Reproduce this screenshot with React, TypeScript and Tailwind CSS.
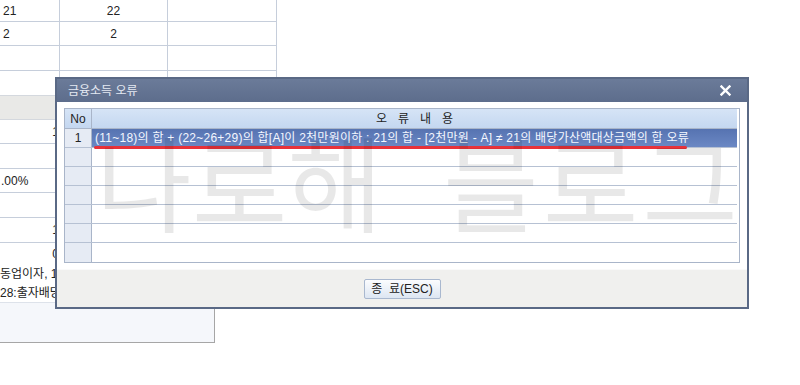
import React from "react";

const F = { fontFamily: '"Liberation Sans", "Noto Sans CJK KR", sans-serif' };

function Cell({ w, children, align = "left", border = true }: { w: string; children?: React.ReactNode; align?: string; border?: boolean }) {
  return (
    <div
      className={`${w} h-full flex items-center px-[3px] ${border ? "border-r border-[#c6cedb]" : ""} ${
        align === "center" ? "justify-center" : align === "right" ? "justify-end" : "justify-start"
      }`}
    >
      {children}
    </div>
  );
}

export default function App() {
  const emptyRows = [0, 1, 2, 3, 4, 5];
  return (
    <div className="relative w-[800px] h-[385px] bg-white overflow-hidden text-[12px] text-[#222]" style={F}>
      {/* Background page */}
      <div className="w-[277px] flex flex-col">
        <div className="flex h-[22px] border-b border-[#c6cedb]">
          <Cell w="w-[60px]">21</Cell>
          <Cell w="w-[108px]" align="center">22</Cell>
          <Cell w="w-[109px]" />
        </div>
        <div className="flex h-[24px] border-b border-[#c6cedb]">
          <Cell w="w-[60px]">2</Cell>
          <Cell w="w-[108px]" align="center">2</Cell>
          <Cell w="w-[109px]" />
        </div>
        <div className="flex h-[25px] border-b border-[#c6cedb]">
          <Cell w="w-[60px]" />
          <Cell w="w-[108px]" />
          <Cell w="w-[109px]" />
        </div>
        <div className="flex h-[24px]">
          <Cell w="w-[60px]" />
          <Cell w="w-[108px]" />
          <Cell w="w-[109px]" />
        </div>
        <div className="h-[25px] bg-[#e9e9e7] border-y border-[#d4d8de]" />
        <div className="h-[24px] border-b border-[#c6cedb] flex items-center justify-end w-[60px] pr-[1px]">1</div>
        <div className="h-[25px] border-b border-[#c6cedb]" />
        <div className="h-[24px] border-b border-[#c6cedb] flex items-center pl-[1px]">.00%</div>
        <div className="h-[25px] border-b border-[#c6cedb]" />
        <div className="h-[25px] border-b border-[#c6cedb] flex items-center justify-end w-[60px] pr-[1px]">1</div>
        <div className="h-[22px] flex items-center justify-end w-[60px] pr-[1px]">0</div>
        <div className="h-[37px] flex flex-col justify-center leading-[19px] whitespace-nowrap">
          <div>동업이자, 1</div>
          <div>28:출자배당</div>
        </div>
        <div className="w-[215px] h-[41px] bg-[#f5f7fb] border-r border-b border-[#a6a6a6] border-t border-t-[#dde2ea]" />
      </div>

      {/* Dialog window */}
      <div className="absolute left-[55px] top-[77px] w-[694px] h-[232px] border-2 border-[#5a6985] flex flex-col bg-white">
        <div className="h-[23px] shrink-0 bg-gradient-to-b from-[#6b7b99] to-[#5d6d8c] flex items-center justify-between pl-[11px] pr-[16px]">
          <span className="text-[#e4e9f2] text-[12px]">금융소득 오류</span>
          <svg width="11" height="11" viewBox="0 0 11 11">
            <path d="M1.5 1.5 L9.5 9.5 M9.5 1.5 L1.5 9.5" stroke="#ffffff" strokeWidth="2.4" strokeLinecap="square" />
          </svg>
        </div>
        <div className="flex-1 px-[7px] pt-[6px] pb-[6px] flex flex-col">
          <div className="border border-[#a9b5c9] pr-[2px] flex flex-col">
            <div className="flex h-[20px] bg-gradient-to-b from-[#d6e4f6] to-[#c4d7f0] border-b border-[#a9b5c9]">
              <div className="w-[27px] border-r border-[#a9b5c9] flex items-center justify-center">No</div>
              <div className="flex-1 flex items-center justify-center tracking-[11px] pl-[11px]">오류내용</div>
            </div>
            <div className="flex h-[19px] border-b border-[#b6c1d3]">
              <div className="w-[27px] border-r border-[#a9b5c9] bg-[#e6ebf4] flex items-center justify-center">1</div>
              <div className="flex-1 bg-gradient-to-b from-[#5673b1] to-[#6b88c4] text-[#f4f7ff] flex items-center pl-[3px] whitespace-nowrap tracking-[0.25px]">
                (11~18)의 합 + (22~26+29)의 합[A]이 2천만원이하 : 21의 합 - [2천만원 - A] ≠ 21의 배당가산액대상금액의 합 오류
              </div>
            </div>
            {emptyRows.map((i) => (
              <div key={i} className={`flex h-[19px] ${i < 5 ? "border-b border-[#b6c1d3]" : ""}`}>
                <div className="w-[27px] border-r border-[#a9b5c9] bg-[#e6ebf4]" />
                <div className="flex-1 bg-white" />
              </div>
            ))}
          </div>
        </div>
        <div className="h-[38px] shrink-0 bg-[#f0f0ee] border-t border-[#fafafa] flex items-center justify-center">
          <button className="w-[77px] h-[20px] rounded-[2px] border border-[#a9b8cf] bg-gradient-to-b from-[#fbfcfe] to-[#dde6f2] text-[12px] text-[#222] flex items-center justify-center whitespace-pre">
            종  료(ESC)
          </button>
        </div>
      </div>

      {/* Red annotation underline */}
      <div className="absolute left-[94px] top-[146px] w-[593px] h-[3px] bg-[#e8323a] rounded-full" />

      {/* Watermark */}
      <div
        className="absolute left-[96px] top-[128px] text-[104px] leading-none text-black/[0.09] whitespace-nowrap pointer-events-none font-normal"
        style={{ fontFamily: '"Noto Sans CJK KR", sans-serif' }}
      >
        나로해
      </div>
      <div
        className="absolute left-[443px] top-[128px] text-[104px] leading-none text-black/[0.09] whitespace-nowrap pointer-events-none font-normal tracking-[4px]"
        style={{ fontFamily: '"Noto Sans CJK KR", sans-serif' }}
      >
        블로그
      </div>
    </div>
  );
}
